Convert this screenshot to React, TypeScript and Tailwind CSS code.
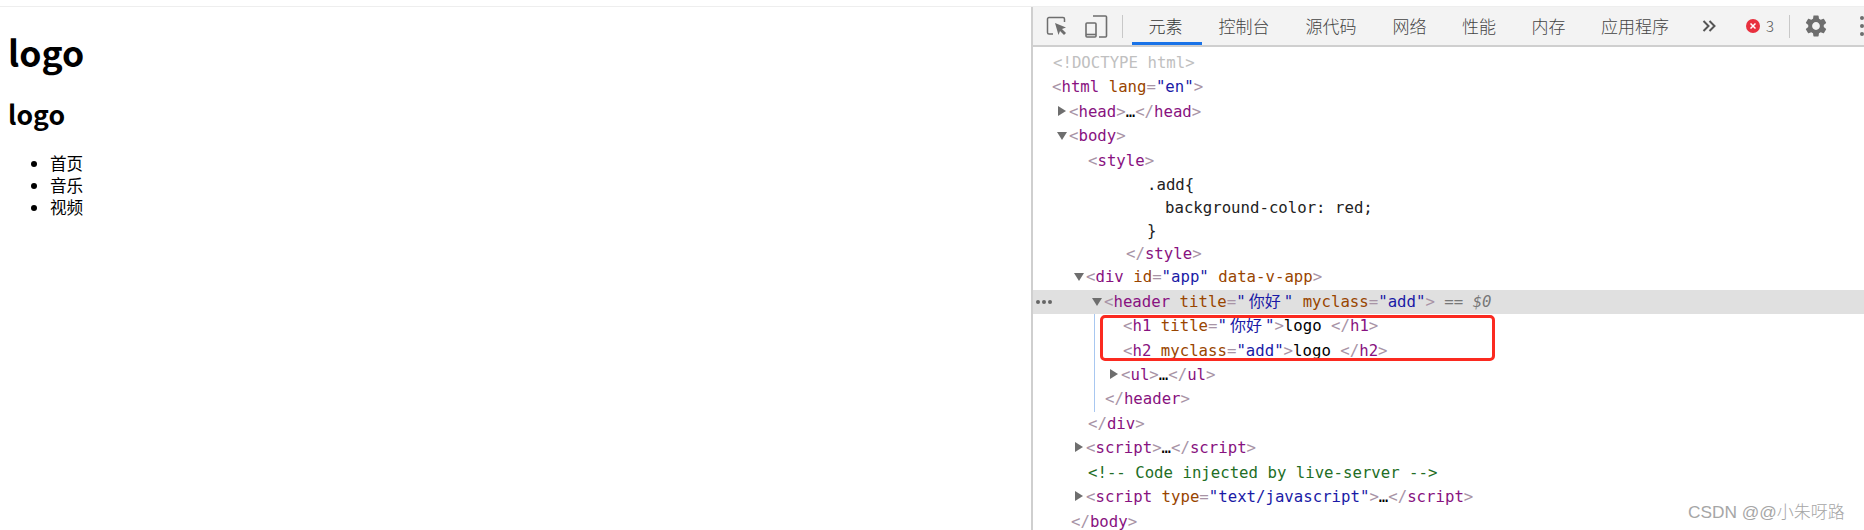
import type { ReactNode } from 'react'
import { MdSettings } from 'react-icons/md'

const mono = "font-['DejaVu_Sans_Mono','Noto_Sans_CJK_SC',monospace]"

function B({ children }: { children: ReactNode }) {
  return <span className="text-[#a894a6]">{children}</span>
}
function T({ children }: { children: ReactNode }) {
  return <span className="text-[#881280]">{children}</span>
}
function A({ children }: { children: ReactNode }) {
  return <span className="text-[#994500]">{children}</span>
}
function V({ children }: { children: ReactNode }) {
  return <span className="text-[#1a1aa6]">{children}</span>
}
function Cjk({ children }: { children: ReactNode }) {
  return <span className="inline-block w-[38px] text-center font-['Noto_Sans_CJK_SC',sans-serif] text-[16px] font-normal leading-none">{children}</span>
}

function Arrow({ open }: { open?: boolean }) {
  return (
    <span className="mr-[3px] inline-flex h-[14px] w-[9px] items-center justify-center align-[1px]">
      {open ? (
        <span className="h-0 w-0 border-x-[5px] border-t-[8px] border-x-transparent border-t-[#6e6e6e]" />
      ) : (
        <span className="h-0 w-0 border-y-[5px] border-l-[8px] border-y-transparent border-l-[#6e6e6e]" />
      )}
    </span>
  )
}

function Row({ className, children }: { className: string; children: ReactNode }) {
  return <div className={`h-[24.45px] whitespace-pre leading-[24.45px] ${className}`}>{children}</div>
}

// the text lines inside <style> sit closer together
function TightRow({ className, children }: { className: string; children: ReactNode }) {
  return <div className={`h-[23px] whitespace-pre leading-[23px] ${className}`}>{children}</div>
}

const tabs = [
  { label: '控制台', w: 'w-[86px]' },
  { label: '源代码', w: 'w-[88px]' },
  { label: '网络', w: 'w-[69px]' },
  { label: '性能', w: 'w-[70px]' },
  { label: '内存', w: 'w-[69px]' },
  { label: '应用程序', w: 'w-[104px]' },
]

function Toolbar() {
  return (
    <div className="flex h-[40px] items-center border-b-2 border-[#cfcfcf] bg-[#f3f3f3] font-['Noto_Sans_CJK_SC',sans-serif] text-[17px] font-light text-[#444]">
      <svg className="ml-[13px] h-[22px] w-[22px] text-[#6e6e6e]" viewBox="0 0 22 22" fill="none" stroke="currentColor">
        <path d="M7 19H3a1.5 1.5 0 0 1-1.5-1.5V4A1.5 1.5 0 0 1 3 2.500h14A1.500 1.500 0 0 1 18.500 4v3" strokeWidth="1.500" />
        <path d="M9 8l11 4.500-4 1.500 4 4-2 2-4-4-1.500 4z" fill="currentColor" stroke="none" />
      </svg>
      <svg className="ml-[16px] h-[25px] w-[25px] text-[#6e6e6e]" viewBox="0 0 25 25" fill="none" stroke="currentColor" strokeWidth="1.600">
        <path d="M9 2h12.500a1 1 0 0 1 1 1v19a1 1 0 0 1-1 1H15" />
        <rect x="2" y="9" width="10" height="14" rx="1" />
        <path d="M2 20.500h10" />
      </svg>
      <div className="ml-[13px] mr-[9px] h-[23px] w-[1px] bg-[#c8c8c8]" />
      <div className="flex h-full w-[70px] items-center justify-center border-b-[3px] border-[#1a73e8] pr-[3px] pt-[3px] text-[#333]">元素</div>
      {tabs.map((t) => (
        <div key={t.label} className={`flex h-full items-center justify-center pr-[2px] ${t.w}`}>
          {t.label}
        </div>
      ))}
      <svg className="ml-[14px] h-[14px] w-[14px] text-[#555]" viewBox="0 0 14 14" fill="none" stroke="currentColor" strokeWidth="2">
        <path d="M1.500 2l5 5-5 5M7.500 2l5 5-5 5" />
      </svg>
      <div className="ml-[30px] flex h-[14px] w-[14px] items-center justify-center rounded-full bg-[#e8303e] text-white">
        <svg className="h-[6px] w-[6px]" viewBox="0 0 6 6" stroke="currentColor" strokeWidth="1.500">
          <path d="M0.500 0.500l5 5M5.500 0.500l-5 5" />
        </svg>
      </div>
      <span className="ml-[6px] text-[15px] text-[#555]">3</span>
      <div className="ml-[15px] h-[23px] w-[1px] bg-[#c8c8c8]" />
      <MdSettings className="ml-[13px] h-[26px] w-[26px] text-[#6e6e6e]" />
      <div className="ml-[31px] flex flex-col gap-[4px]">
        <span className="h-[4px] w-[4px] rounded-full bg-[#6e6e6e]" />
        <span className="h-[4px] w-[4px] rounded-full bg-[#6e6e6e]" />
        <span className="h-[4px] w-[4px] rounded-full bg-[#6e6e6e]" />
      </div>
    </div>
  )
}

export default function App() {
  return (
    <div className="relative h-[530px] w-[1864px] overflow-hidden bg-white text-black">
      <div className="h-[6px]" />
      <div className="flex h-[524px] border-t border-[#eeeeee]">
        <div className="w-[1031px] px-[8px] font-['Noto_Sans_CJK_SC',sans-serif]">
          <h1 className="mt-[24px] text-[35.5px] font-bold leading-[42px]">logo</h1>
          <h2 className="mt-[25px] text-[26.6px] font-bold leading-[32px]">logo</h2>
          <ul className="mt-[22px] list-disc pl-[42px] text-[16.6px] leading-[22px]">
            <li>首页</li>
            <li>音乐</li>
            <li>视频</li>
          </ul>
        </div>
        <div className="flex-1 overflow-hidden border-l-2 border-[#cfcfcf]">
          <Toolbar />
          <div className={`pt-[4px] text-[15.7px] ${mono}`}>
            <Row className="pl-[20px]"><span className="text-[#c0c0c0]">{'<!DOCTYPE html>'}</span></Row>
            <Row className="pl-[19px]">
              <B>{'<'}</B><T>html</T> <A>lang</A><B>=</B><V>"en"</V><B>{'>'}</B>
            </Row>
            <Row className="pl-[24px]">
              <Arrow /><B>{'<'}</B><T>head</T><B>{'>'}</B>…<B>{'</'}</B><T>head</T><B>{'>'}</B>
            </Row>
            <Row className="pl-[24px]">
              <Arrow open /><B>{'<'}</B><T>body</T><B>{'>'}</B>
            </Row>
            <Row className="pl-[55px]"><B>{'<'}</B><T>style</T><B>{'>'}</B></Row>
            <TightRow className="pl-[114px] text-[#222]">.add{'{'}</TightRow>
            <TightRow className="pl-[132px] text-[#222]">background-color: red;</TightRow>
            <TightRow className="pl-[114px] text-[#222]">{'}'}</TightRow>
            <TightRow className="pl-[93px]"><B>{'</'}</B><T>style</T><B>{'>'}</B></TightRow>
            <Row className="pl-[41px]">
              <Arrow open /><B>{'<'}</B><T>div</T> <A>id</A><B>=</B><V>"app"</V> <A>data-v-app</A><B>{'>'}</B>
            </Row>
            <Row className="relative bg-[#e0e0e0] pl-[59px]">
              <span className="absolute left-[3px] top-[10px] flex gap-[2px]">
                <span className="h-[4px] w-[4px] rounded-full bg-[#666]" />
                <span className="h-[4px] w-[4px] rounded-full bg-[#666]" />
                <span className="h-[4px] w-[4px] rounded-full bg-[#666]" />
              </span>
              <Arrow open /><B>{'<'}</B><T>header</T> <A>title</A><B>=</B><V>"<Cjk>你好</Cjk>"</V> <A>myclass</A><B>=</B><V>"add"</V><B>{'>'}</B>
              <span className="italic text-[#777]"> == $0</span>
            </Row>
            <div className="ml-[61px] border-l border-[#a8c7f0]">
              <Row className="pl-[28px]">
                <B>{'<'}</B><T>h1</T> <A>title</A><B>=</B><V>"<Cjk>你好</Cjk>"</V><B>{'>'}</B>logo <B>{'</'}</B><T>h1</T><B>{'>'}</B>
              </Row>
              <Row className="pl-[28px]">
                <B>{'<'}</B><T>h2</T> <A>myclass</A><B>=</B><V>"add"</V><B>{'>'}</B>logo <B>{'</'}</B><T>h2</T><B>{'>'}</B>
              </Row>
              <Row className="pl-[14px]">
                <Arrow /><B>{'<'}</B><T>ul</T><B>{'>'}</B>…<B>{'</'}</B><T>ul</T><B>{'>'}</B>
              </Row>
              <Row className="pl-[10px]"><B>{'</'}</B><T>header</T><B>{'>'}</B></Row>
            </div>
            <Row className="pl-[55px]"><B>{'</'}</B><T>div</T><B>{'>'}</B></Row>
            <Row className="pl-[41px]">
              <Arrow /><B>{'<'}</B><T>script</T><B>{'>'}</B>…<B>{'</'}</B><T>script</T><B>{'>'}</B>
            </Row>
            <Row className="pl-[55px] text-[#236e25]">{'<!-- Code injected by live-server -->'}</Row>
            <Row className="pl-[41px]">
              <Arrow /><B>{'<'}</B><T>script</T> <A>type</A><B>=</B><V>"text/javascript"</V><B>{'>'}</B>…<B>{'</'}</B><T>script</T><B>{'>'}</B>
            </Row>
            <Row className="pl-[38px]"><B>{'</'}</B><T>body</T><B>{'>'}</B></Row>
          </div>
        </div>
      </div>
      {/* red annotation drawn over the screenshot */}
      <div className="absolute left-[1100px] top-[315px] h-[46px] w-[395px] rounded-[5px] border-[3px] border-[#fb2a20]" />
      <div className="absolute left-[1688px] top-[500px] font-['Liberation_Sans',sans-serif] text-[17.3px] leading-[22px] text-[#a6a6a6]">
        CSDN @@<span className="font-['Noto_Sans_CJK_SC',sans-serif] text-[17px] font-light">小朱呀路</span>
      </div>
    </div>
  )
}
